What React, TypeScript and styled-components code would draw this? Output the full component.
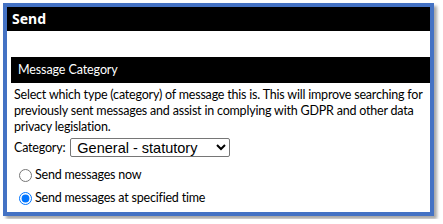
import styled, { createGlobalStyle } from "styled-components";

const GlobalStyle = createGlobalStyle`
  body {
    margin: 0;
    background: #ffffff;
    font-family: Lato, "Noto Sans", sans-serif;
  }
`;

const Frame = styled.div`
  margin: 3px;
  width: 423px;
  height: 205px;
  border: 4px solid #4472c4;
  box-shadow: 3px 3px 3px rgba(0, 0, 0, 0.35);
  background: #ffffff;
  box-sizing: content-box;
`;

const Header = styled.div`
  height: 24px;
  background: #000000;
  color: #ffffff;
  font-family: "Noto Sans", sans-serif;
  font-weight: 700;
  font-size: 14px;
  line-height: 24px;
  padding-left: 5px;
`;

const Section = styled.div`
  padding: 26px 0 0 4px;
`;

const SectionTitle = styled.div`
  height: 26px;
  background: #000000;
  color: #ffffff;
  font-size: 12.5px;
  letter-spacing: -0.1px;
  line-height: 26px;
  padding-left: 7px;
`;

const Body = styled.div`
  padding: 4px 3px 0 3px;
  color: #000000;
  font-size: 12.5px;
  letter-spacing: -0.2px;
`;

const Intro = styled.p`
  margin: 0;
  line-height: 16px;
`;

const CategoryRow = styled.label`
  display: flex;
  align-items: center;
  gap: 5px;
  margin-top: 3px;
  line-height: 16px;
`;

const Select = styled.select`
  width: 160px;
  height: 19px;
  padding: 0 2px;
  border: 1px solid #767676;
  border-radius: 2px;
  background: #ffffff;
  color: #000000;
  font-family: "Liberation Sans", Arial, sans-serif;
  font-size: 14.5px;
  letter-spacing: 0;
`;

const Options = styled.div`
  display: flex;
  flex-direction: column;
  gap: 7px;
  margin-top: 10px;
`;

const RadioRow = styled.label`
  display: flex;
  align-items: center;
  height: 16px;
  line-height: 16px;
`;

const Radio = styled.input`
  width: 13px;
  height: 13px;
  margin: 0 3px 0 5px;
`;

export default function App() {
  return (
    <>
      <GlobalStyle />
      <Frame>
        <Header>Send</Header>
        <Section>
          <SectionTitle>Message Category</SectionTitle>
          <Body>
            <Intro>
              Select which type (category) of message this is. This will
              improve searching for previously sent messages and assist in
              complying with GDPR and other data privacy legislation.
            </Intro>
            <CategoryRow>
              Category:
              <Select defaultValue="general-statutory">
                <option value="general-statutory">General - statutory</option>
                <option value="general">General</option>
                <option value="marketing">Marketing</option>
              </Select>
            </CategoryRow>
            <Options>
              <RadioRow>
                <Radio type="radio" name="when" value="now" />
                Send messages now
              </RadioRow>
              <RadioRow>
                <Radio type="radio" name="when" value="later" defaultChecked />
                Send messages at specified time
              </RadioRow>
            </Options>
          </Body>
        </Section>
      </Frame>
    </>
  );
}
